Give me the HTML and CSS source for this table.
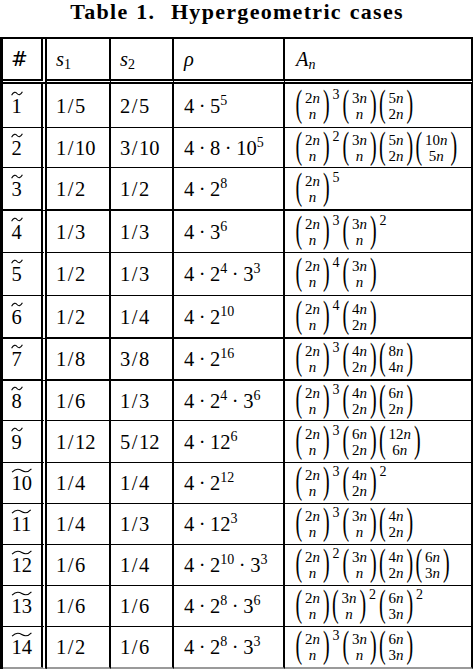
FILE: index.html
```html
<!DOCTYPE html>
<html>
<head>
<meta charset="utf-8">
<link rel="stylesheet" href="styles.css">
</head>
<body>
<div class="title">Table 1.&nbsp; Hypergeometric cases</div>
<div class="tbl" role="table">
  <div class="row head" role="row">
    <div class="c c0"><span class="hash">#</span></div>
    <div class="c c1"><span class="m"><i>s</i><sub>1</sub></span></div>
    <div class="c c2"><span class="m"><i>s</i><sub>2</sub></span></div>
    <div class="c c3"><span class="m"><i>ρ</i></span></div>
    <div class="c c4"><span class="m"><i>A</i><sub><i>n</i></sub></span></div>
  </div>

  <div class="row" role="row">
    <div class="c c0"><span class="tl"><svg class="tw" viewBox="0 0 12 5" preserveAspectRatio="none"><path d="M0.6 4.2 C2.5 0.6 4.5 0.8 6 2.5 C7.5 4.2 9.5 4.4 11.4 0.8"/></svg><span class="dg">1</span></span></div>
    <div class="c c1"><span class="m">1<span class="sl">/</span>5</span></div>
    <div class="c c2"><span class="m">2<span class="sl">/</span>5</span></div>
    <div class="c c3"><span class="m">4<span class="op">·</span>5<sup>5</sup></span></div>
    <div class="c c4"><span class="ex">
      <span class="bn"><span class="pl">(</span><span class="st"><span>2<i>n</i></span><span><i>n</i></span></span><span class="pr">)</span></span><sup class="pw">3</sup>
      <span class="bn"><span class="pl">(</span><span class="st"><span>3<i>n</i></span><span><i>n</i></span></span><span class="pr">)</span></span>
      <span class="bn"><span class="pl">(</span><span class="st"><span>5<i>n</i></span><span>2<i>n</i></span></span><span class="pr">)</span></span>
    </span></div>
  </div>

  <div class="row" role="row">
    <div class="c c0"><span class="tl"><svg class="tw" viewBox="0 0 12 5" preserveAspectRatio="none"><path d="M0.6 4.2 C2.5 0.6 4.5 0.8 6 2.5 C7.5 4.2 9.5 4.4 11.4 0.8"/></svg><span class="dg">2</span></span></div>
    <div class="c c1"><span class="m">1<span class="sl">/</span>10</span></div>
    <div class="c c2"><span class="m">3<span class="sl">/</span>10</span></div>
    <div class="c c3"><span class="m">4<span class="op">·</span>8<span class="op">·</span>10<sup>5</sup></span></div>
    <div class="c c4"><span class="ex">
      <span class="bn"><span class="pl">(</span><span class="st"><span>2<i>n</i></span><span><i>n</i></span></span><span class="pr">)</span></span><sup class="pw">2</sup>
      <span class="bn"><span class="pl">(</span><span class="st"><span>3<i>n</i></span><span><i>n</i></span></span><span class="pr">)</span></span>
      <span class="bn"><span class="pl">(</span><span class="st"><span>5<i>n</i></span><span>2<i>n</i></span></span><span class="pr">)</span></span>
      <span class="bn"><span class="pl">(</span><span class="st"><span>10<i>n</i></span><span>5<i>n</i></span></span><span class="pr">)</span></span>
    </span></div>
  </div>

  <div class="row thick" role="row">
    <div class="c c0"><span class="tl"><svg class="tw" viewBox="0 0 12 5" preserveAspectRatio="none"><path d="M0.6 4.2 C2.5 0.6 4.5 0.8 6 2.5 C7.5 4.2 9.5 4.4 11.4 0.8"/></svg><span class="dg">3</span></span></div>
    <div class="c c1"><span class="m">1<span class="sl">/</span>2</span></div>
    <div class="c c2"><span class="m">1<span class="sl">/</span>2</span></div>
    <div class="c c3"><span class="m">4<span class="op">·</span>2<sup>8</sup></span></div>
    <div class="c c4"><span class="ex">
      <span class="bn"><span class="pl">(</span><span class="st"><span>2<i>n</i></span><span><i>n</i></span></span><span class="pr">)</span></span><sup class="pw">5</sup>
    </span></div>
  </div>

  <div class="row" role="row">
    <div class="c c0"><span class="tl"><svg class="tw" viewBox="0 0 12 5" preserveAspectRatio="none"><path d="M0.6 4.2 C2.5 0.6 4.5 0.8 6 2.5 C7.5 4.2 9.5 4.4 11.4 0.8"/></svg><span class="dg">4</span></span></div>
    <div class="c c1"><span class="m">1<span class="sl">/</span>3</span></div>
    <div class="c c2"><span class="m">1<span class="sl">/</span>3</span></div>
    <div class="c c3"><span class="m">4<span class="op">·</span>3<sup>6</sup></span></div>
    <div class="c c4"><span class="ex">
      <span class="bn"><span class="pl">(</span><span class="st"><span>2<i>n</i></span><span><i>n</i></span></span><span class="pr">)</span></span><sup class="pw">3</sup>
      <span class="bn"><span class="pl">(</span><span class="st"><span>3<i>n</i></span><span><i>n</i></span></span><span class="pr">)</span></span><sup class="pw">2</sup>
    </span></div>
  </div>

  <div class="row" role="row">
    <div class="c c0"><span class="tl"><svg class="tw" viewBox="0 0 12 5" preserveAspectRatio="none"><path d="M0.6 4.2 C2.5 0.6 4.5 0.8 6 2.5 C7.5 4.2 9.5 4.4 11.4 0.8"/></svg><span class="dg">5</span></span></div>
    <div class="c c1"><span class="m">1<span class="sl">/</span>2</span></div>
    <div class="c c2"><span class="m">1<span class="sl">/</span>3</span></div>
    <div class="c c3"><span class="m">4<span class="op">·</span>2<sup>4</sup><span class="op">·</span>3<sup>3</sup></span></div>
    <div class="c c4"><span class="ex">
      <span class="bn"><span class="pl">(</span><span class="st"><span>2<i>n</i></span><span><i>n</i></span></span><span class="pr">)</span></span><sup class="pw">4</sup>
      <span class="bn"><span class="pl">(</span><span class="st"><span>3<i>n</i></span><span><i>n</i></span></span><span class="pr">)</span></span>
    </span></div>
  </div>

  <div class="row thick" role="row">
    <div class="c c0"><span class="tl"><svg class="tw" viewBox="0 0 12 5" preserveAspectRatio="none"><path d="M0.6 4.2 C2.5 0.6 4.5 0.8 6 2.5 C7.5 4.2 9.5 4.4 11.4 0.8"/></svg><span class="dg">6</span></span></div>
    <div class="c c1"><span class="m">1<span class="sl">/</span>2</span></div>
    <div class="c c2"><span class="m">1<span class="sl">/</span>4</span></div>
    <div class="c c3"><span class="m">4<span class="op">·</span>2<sup>10</sup></span></div>
    <div class="c c4"><span class="ex">
      <span class="bn"><span class="pl">(</span><span class="st"><span>2<i>n</i></span><span><i>n</i></span></span><span class="pr">)</span></span><sup class="pw">4</sup>
      <span class="bn"><span class="pl">(</span><span class="st"><span>4<i>n</i></span><span>2<i>n</i></span></span><span class="pr">)</span></span>
    </span></div>
  </div>

  <div class="row thick" role="row">
    <div class="c c0"><span class="tl"><svg class="tw" viewBox="0 0 12 5" preserveAspectRatio="none"><path d="M0.6 4.2 C2.5 0.6 4.5 0.8 6 2.5 C7.5 4.2 9.5 4.4 11.4 0.8"/></svg><span class="dg">7</span></span></div>
    <div class="c c1"><span class="m">1<span class="sl">/</span>8</span></div>
    <div class="c c2"><span class="m">3<span class="sl">/</span>8</span></div>
    <div class="c c3"><span class="m">4<span class="op">·</span>2<sup>16</sup></span></div>
    <div class="c c4"><span class="ex">
      <span class="bn"><span class="pl">(</span><span class="st"><span>2<i>n</i></span><span><i>n</i></span></span><span class="pr">)</span></span><sup class="pw">3</sup>
      <span class="bn"><span class="pl">(</span><span class="st"><span>4<i>n</i></span><span>2<i>n</i></span></span><span class="pr">)</span></span>
      <span class="bn"><span class="pl">(</span><span class="st"><span>8<i>n</i></span><span>4<i>n</i></span></span><span class="pr">)</span></span>
    </span></div>
  </div>

  <div class="row" role="row">
    <div class="c c0"><span class="tl"><svg class="tw" viewBox="0 0 12 5" preserveAspectRatio="none"><path d="M0.6 4.2 C2.5 0.6 4.5 0.8 6 2.5 C7.5 4.2 9.5 4.4 11.4 0.8"/></svg><span class="dg">8</span></span></div>
    <div class="c c1"><span class="m">1<span class="sl">/</span>6</span></div>
    <div class="c c2"><span class="m">1<span class="sl">/</span>3</span></div>
    <div class="c c3"><span class="m">4<span class="op">·</span>2<sup>4</sup><span class="op">·</span>3<sup>6</sup></span></div>
    <div class="c c4"><span class="ex">
      <span class="bn"><span class="pl">(</span><span class="st"><span>2<i>n</i></span><span><i>n</i></span></span><span class="pr">)</span></span><sup class="pw">3</sup>
      <span class="bn"><span class="pl">(</span><span class="st"><span>4<i>n</i></span><span>2<i>n</i></span></span><span class="pr">)</span></span>
      <span class="bn"><span class="pl">(</span><span class="st"><span>6<i>n</i></span><span>2<i>n</i></span></span><span class="pr">)</span></span>
    </span></div>
  </div>

  <div class="row" role="row">
    <div class="c c0"><span class="tl"><svg class="tw" viewBox="0 0 12 5" preserveAspectRatio="none"><path d="M0.6 4.2 C2.5 0.6 4.5 0.8 6 2.5 C7.5 4.2 9.5 4.4 11.4 0.8"/></svg><span class="dg">9</span></span></div>
    <div class="c c1"><span class="m">1<span class="sl">/</span>12</span></div>
    <div class="c c2"><span class="m">5<span class="sl">/</span>12</span></div>
    <div class="c c3"><span class="m">4<span class="op">·</span>12<sup>6</sup></span></div>
    <div class="c c4"><span class="ex">
      <span class="bn"><span class="pl">(</span><span class="st"><span>2<i>n</i></span><span><i>n</i></span></span><span class="pr">)</span></span><sup class="pw">3</sup>
      <span class="bn"><span class="pl">(</span><span class="st"><span>6<i>n</i></span><span>2<i>n</i></span></span><span class="pr">)</span></span>
      <span class="bn"><span class="pl">(</span><span class="st"><span>12<i>n</i></span><span>6<i>n</i></span></span><span class="pr">)</span></span>
    </span></div>
  </div>

  <div class="row" role="row">
    <div class="c c0"><span class="tl"><svg class="tw" viewBox="0 0 12 5" preserveAspectRatio="none"><path d="M0.6 4.2 C2.5 0.6 4.5 0.8 6 2.5 C7.5 4.2 9.5 4.4 11.4 0.8"/></svg><span class="dg">10</span></span></div>
    <div class="c c1"><span class="m">1<span class="sl">/</span>4</span></div>
    <div class="c c2"><span class="m">1<span class="sl">/</span>4</span></div>
    <div class="c c3"><span class="m">4<span class="op">·</span>2<sup>12</sup></span></div>
    <div class="c c4"><span class="ex">
      <span class="bn"><span class="pl">(</span><span class="st"><span>2<i>n</i></span><span><i>n</i></span></span><span class="pr">)</span></span><sup class="pw">3</sup>
      <span class="bn"><span class="pl">(</span><span class="st"><span>4<i>n</i></span><span>2<i>n</i></span></span><span class="pr">)</span></span><sup class="pw">2</sup>
    </span></div>
  </div>

  <div class="row" role="row">
    <div class="c c0"><span class="tl"><svg class="tw" viewBox="0 0 12 5" preserveAspectRatio="none"><path d="M0.6 4.2 C2.5 0.6 4.5 0.8 6 2.5 C7.5 4.2 9.5 4.4 11.4 0.8"/></svg><span class="dg">11</span></span></div>
    <div class="c c1"><span class="m">1<span class="sl">/</span>4</span></div>
    <div class="c c2"><span class="m">1<span class="sl">/</span>3</span></div>
    <div class="c c3"><span class="m">4<span class="op">·</span>12<sup>3</sup></span></div>
    <div class="c c4"><span class="ex">
      <span class="bn"><span class="pl">(</span><span class="st"><span>2<i>n</i></span><span><i>n</i></span></span><span class="pr">)</span></span><sup class="pw">3</sup>
      <span class="bn"><span class="pl">(</span><span class="st"><span>3<i>n</i></span><span><i>n</i></span></span><span class="pr">)</span></span>
      <span class="bn"><span class="pl">(</span><span class="st"><span>4<i>n</i></span><span>2<i>n</i></span></span><span class="pr">)</span></span>
    </span></div>
  </div>

  <div class="row" role="row">
    <div class="c c0"><span class="tl"><svg class="tw" viewBox="0 0 12 5" preserveAspectRatio="none"><path d="M0.6 4.2 C2.5 0.6 4.5 0.8 6 2.5 C7.5 4.2 9.5 4.4 11.4 0.8"/></svg><span class="dg">12</span></span></div>
    <div class="c c1"><span class="m">1<span class="sl">/</span>6</span></div>
    <div class="c c2"><span class="m">1<span class="sl">/</span>4</span></div>
    <div class="c c3"><span class="m">4<span class="op">·</span>2<sup>10</sup><span class="op">·</span>3<sup>3</sup></span></div>
    <div class="c c4"><span class="ex">
      <span class="bn"><span class="pl">(</span><span class="st"><span>2<i>n</i></span><span><i>n</i></span></span><span class="pr">)</span></span><sup class="pw">2</sup>
      <span class="bn"><span class="pl">(</span><span class="st"><span>3<i>n</i></span><span><i>n</i></span></span><span class="pr">)</span></span>
      <span class="bn"><span class="pl">(</span><span class="st"><span>4<i>n</i></span><span>2<i>n</i></span></span><span class="pr">)</span></span>
      <span class="bn"><span class="pl">(</span><span class="st"><span>6<i>n</i></span><span>3<i>n</i></span></span><span class="pr">)</span></span>
    </span></div>
  </div>

  <div class="row" role="row">
    <div class="c c0"><span class="tl"><svg class="tw" viewBox="0 0 12 5" preserveAspectRatio="none"><path d="M0.6 4.2 C2.5 0.6 4.5 0.8 6 2.5 C7.5 4.2 9.5 4.4 11.4 0.8"/></svg><span class="dg">13</span></span></div>
    <div class="c c1"><span class="m">1<span class="sl">/</span>6</span></div>
    <div class="c c2"><span class="m">1<span class="sl">/</span>6</span></div>
    <div class="c c3"><span class="m">4<span class="op">·</span>2<sup>8</sup><span class="op">·</span>3<sup>6</sup></span></div>
    <div class="c c4"><span class="ex">
      <span class="bn"><span class="pl">(</span><span class="st"><span>2<i>n</i></span><span><i>n</i></span></span><span class="pr">)</span></span>
      <span class="bn"><span class="pl">(</span><span class="st"><span>3<i>n</i></span><span><i>n</i></span></span><span class="pr">)</span></span><sup class="pw">2</sup>
      <span class="bn"><span class="pl">(</span><span class="st"><span>6<i>n</i></span><span>3<i>n</i></span></span><span class="pr">)</span></span><sup class="pw">2</sup>
    </span></div>
  </div>

  <div class="row last" role="row">
    <div class="c c0"><span class="tl"><svg class="tw" viewBox="0 0 12 5" preserveAspectRatio="none"><path d="M0.6 4.2 C2.5 0.6 4.5 0.8 6 2.5 C7.5 4.2 9.5 4.4 11.4 0.8"/></svg><span class="dg">14</span></span></div>
    <div class="c c1"><span class="m">1<span class="sl">/</span>2</span></div>
    <div class="c c2"><span class="m">1<span class="sl">/</span>6</span></div>
    <div class="c c3"><span class="m">4<span class="op">·</span>2<sup>8</sup><span class="op">·</span>3<sup>3</sup></span></div>
    <div class="c c4"><span class="ex">
      <span class="bn"><span class="pl">(</span><span class="st"><span>2<i>n</i></span><span><i>n</i></span></span><span class="pr">)</span></span><sup class="pw">3</sup>
      <span class="bn"><span class="pl">(</span><span class="st"><span>3<i>n</i></span><span><i>n</i></span></span><span class="pr">)</span></span>
      <span class="bn"><span class="pl">(</span><span class="st"><span>6<i>n</i></span><span>3<i>n</i></span></span><span class="pr">)</span></span>
    </span></div>
  </div>
</div>
</body>
</html>
```

FILE: styles.css
```css
html, body {
  margin: 0;
  padding: 0;
  background: #fff;
  color: #000;
}

body {
  width: 474px;
  height: 669px;
  overflow: hidden;
  font-family: "Liberation Serif", "Times New Roman", serif;
}

.title {
  height: 37px;
  box-sizing: border-box;
  font-weight: bold;
  font-size: 22px;
  line-height: 23px;
  letter-spacing: 1.3px;
  word-spacing: 1px;
  text-align: center;
}

.tbl {
  display: grid;
  width: 473px;
  box-sizing: border-box;
  grid-template-columns: 44px 64px 63px 111px 188px;
  grid-template-rows: 45px 44px 40px 43px 42px 43px 43px 42px 40px 42px 41px 41px 41px 41px 42px;
  border-left: 3px solid #000;
  border-top: 2px solid #000;
}

.row {
  display: contents;
}

.c {
  box-sizing: border-box;
  display: flex;
  align-items: center;
  border-right: 2px solid #000;
  border-bottom: 1px solid #000;
  font-size: 20.5px;
  line-height: 20px;
  white-space: nowrap;
}

.m {
  display: inline-block;
  line-height: 20px;
}

.row.thick .c {
  border-bottom-width: 2px;
}

.row.head .c {
  border-bottom: 5px double #000;
}

.row.last .c {
  border-bottom: 2px solid #9a9a9a;
}

.c0 {
  border-right: 6px double #000;
  padding-left: 8px;
}

.c1, .c2 {
  padding-left: 9px;
}

.c3 {
  padding-left: 10px;
}

.c4 {
  padding-left: 11px;
}

.hash {
  font-family: "DejaVu Serif", serif;
  font-size: 20px;
}

sub {
  font-size: 14px;
  line-height: 0;
  vertical-align: -3px;
}

sup {
  font-size: 14px;
  line-height: 0;
  vertical-align: 8px;
}

.sl {
  margin: 0 1.5px;
}

.op {
  margin: 0 4.5px;
}

/* tilde over the case number */
.tl {
  display: inline-flex;
  flex-direction: column;
  align-items: stretch;
  margin-top: -5px;
}

.tw {
  display: block;
  width: 100%;
  height: 5px;
  overflow: visible;
}

.tw path {
  fill: none;
  stroke: #000;
  stroke-width: 1.1;
  vector-effect: non-scaling-stroke;
}

.dg {
  display: block;
  padding: 0 0.5px;
  line-height: 20px;
}

/* binomial expressions */
.ex {
  display: inline-flex;
  align-items: center;
  gap: 3.5px;
}

.bn {
  display: inline-flex;
  align-items: center;
  height: 34px;
}

.pl, .pr {
  display: inline-block;
  width: 6px;
  font-size: 20px;
  line-height: 20px;
  transform-origin: 50% 11.8px;
  transform: translateY(-1.8px) scaleY(1.9);
}

.pl {
  text-indent: -0.5px;
}

.st {
  display: inline-flex;
  flex-direction: column;
  align-items: center;
  font-size: 15px;
  line-height: 16px;
  padding: 0 3px;
}

.pw {
  align-self: flex-start;
  vertical-align: baseline;
  line-height: 14px;
  margin-top: -1px;
}
```
